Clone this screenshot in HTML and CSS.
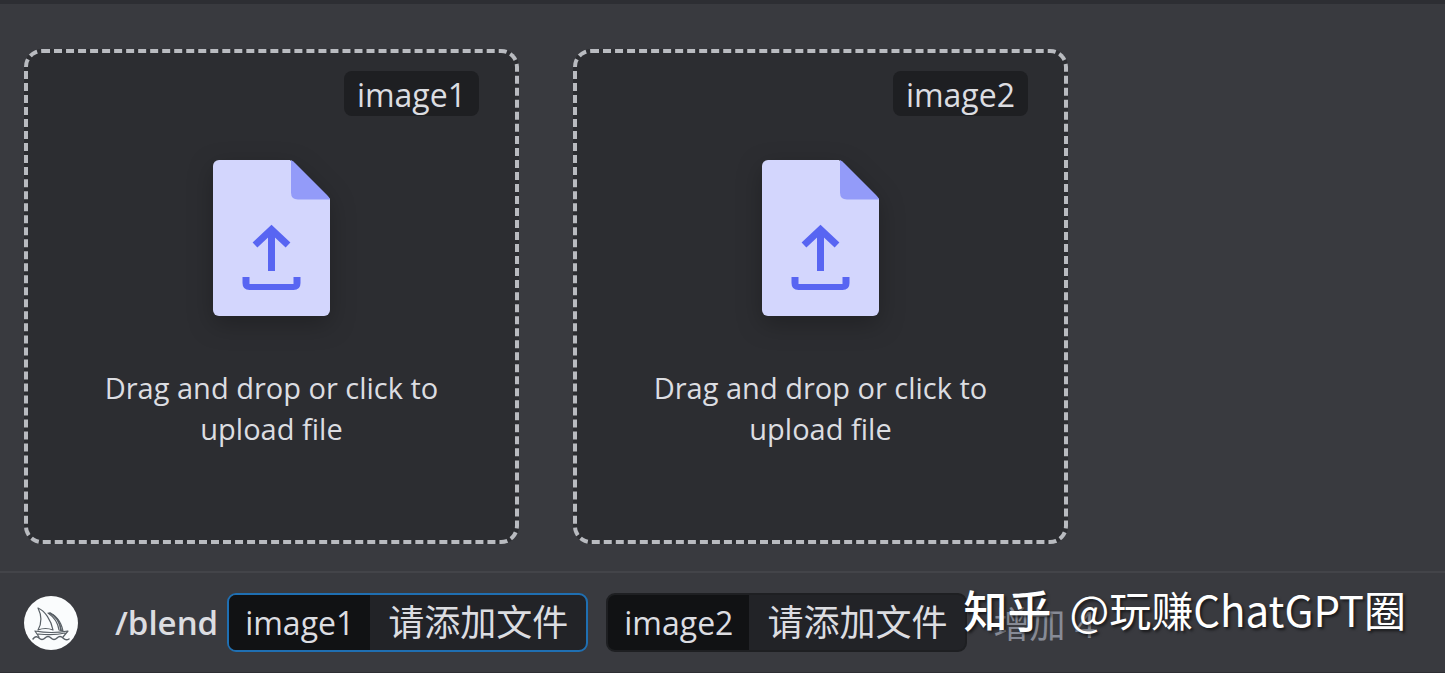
FILE: index.html
```html
<!DOCTYPE html>
<html lang="zh-CN">
<head>
<meta charset="UTF-8">
<meta name="viewport" content="width=device-width, initial-scale=1.0">
<title>/blend</title>
<link rel="stylesheet" href="styles.css">
</head>
<body>

<svg class="sprite" aria-hidden="true">
    <symbol id="upload-file" viewBox="0 0 117 156">
        <path fill="#d3d6fd" d="M6 0H77L117 39V150a6 6 0 0 1-6 6H6a6 6 0 0 1-6-6V6a6 6 0 0 1 6-6z"/>
        <path fill="#939bf9" d="M78 0Q80 1 82 3L114 35Q117 38 117 39.500H85q-7 0-7-7z"/>
        <path fill="none" stroke="#5865f2" stroke-width="7" d="M58.500 111V70M42 85l16.500-15.500L75 85"/>
        <path fill="#5865f2" d="M29.500 117h7v7h44v-7h7v6q0 7-7 7h-44q-7 0-7-7z"/>
    </symbol>
</svg>

<main class="uploads">
    <button class="drop-zone" type="button">
        <span class="tag">image1</span>
        <svg class="file-icon" aria-hidden="true"><use href="#upload-file"/></svg>
        <span class="hint">Drag and drop or click to upload file</span>
    </button>
    <button class="drop-zone" type="button">
        <span class="tag">image2</span>
        <svg class="file-icon" aria-hidden="true"><use href="#upload-file"/></svg>
        <span class="hint">Drag and drop or click to upload file</span>
    </button>
</main>

<form class="command-bar">
    <svg class="avatar" viewBox="0 0 54 54" aria-hidden="true">
        <circle cx="27" cy="27" r="27" fill="#fafcfd"/>
        <g fill="none" stroke="#596066" stroke-width="1.200" stroke-linecap="round" stroke-linejoin="round">
            <path d="M14 12C21 15 27 24 29 34C24 32 19 32 14 34C18 27 18 20 14 12z"/>
            <path d="M24 17C31 18 37 25 39 35L35 34C34 27 30 21 24 17z"/>
            <path d="M26 17C32 20 36 27 37 34" stroke-width="1.800"/>
            <path d="M11 35C22 37 33 37 44 35L39 41M11 35L15 41M14 38C23 39 33 39 41 37"/>
            <path d="M9 43q3-4 6-1t6 0t6 0t6 0t6 0t6 1" stroke-width="1.500"/>
        </g>
    </svg>
    <span class="command">/blend</span>
    <div class="option active">
        <label for="image1">image1</label>
        <input id="image1" type="text" value="请添加文件" readonly>
    </div>
    <div class="option">
        <label for="image2">image2</label>
        <input id="image2" type="text" value="请添加文件" readonly>
    </div>
    <button class="more" type="button">增加 4</button>
</form>

<div class="watermark"><strong>知乎</strong><span>@玩赚ChatGPT圈</span></div>

</body>
</html>
```
FILE: styles.css
```css
:root {
    --bg: #393a3f;
    --card: #2c2d31;
    --tag: #1e1f22;
    --text: #dcdde1;
    --muted: #878b96;
    --focus: #1f6fb2;
}

* {
    box-sizing: border-box;
}

body {
    margin: 0;
    min-height: 100vh;
    display: flex;
    flex-direction: column;
    position: relative;
    background: var(--bg);
    border-top: 4px solid #2d2e33;
    border-bottom: 1px solid #2d2e33;
    color: var(--text);
    font-family: "Open Sans", "Noto Sans CJK SC", sans-serif;
}

button,
input {
    font: inherit;
    color: inherit;
}

.sprite {
    display: none;
}

.uploads {
    display: flex;
    gap: 54px;
    padding: 45px 24px 27px;
}

.drop-zone {
    width: 495px;
    aspect-ratio: 1;
    display: flex;
    flex-direction: column;
    align-items: center;
    padding: 18px 36px;
    background: var(--card);
    border: 4px dashed #b9bbc0;
    border-radius: 18px;
    cursor: pointer;
}

.tag {
    align-self: flex-end;
    padding: 2px 13px 0;
    background: var(--tag);
    border-radius: 8px;
    font-size: 32px;
    line-height: 43px;
}

.file-icon {
    width: 117px;
    height: 156px;
    margin: 44px 0 51px;
    filter: drop-shadow(0 8px 12px rgba(0, 0, 0, 0.25));
}

.hint {
    max-width: 360px;
    font-size: 29px;
    line-height: 41px;
}

.command-bar {
    flex: 1;
    display: flex;
    align-items: center;
    padding: 0 24px;
    border-top: 2px solid #434449;
}

.avatar {
    width: 54px;
    height: 54px;
    margin-right: 37px;
}

.command {
    margin-right: 9px;
    font-size: 33px;
    font-weight: 600;
}

.option {
    display: flex;
    margin-right: 18px;
    height: 59px;
    border: 2px solid var(--tag);
    border-radius: 9px;
    background: #222327;
    overflow: hidden;
    font-size: 32px;
    line-height: 55px;
}

.option.active {
    border-color: var(--focus);
}

.option label {
    padding: 0 16px;
    background: #111214;
}

.option input {
    width: 216px;
    padding: 0 18px;
    border: 0;
    outline: 0;
    background: none;
    font-size: 36px;
}

.more {
    padding: 0 8px;
    border: 0;
    background: none;
    color: var(--muted);
    font-size: 36px;
}

.watermark {
    position: absolute;
    right: 39px;
    bottom: 33px;
    display: flex;
    align-items: center;
    gap: 18px;
    color: #fff;
    font-family: "Noto Sans CJK SC", sans-serif;
    font-size: 42px;
    line-height: 60px;
    text-shadow: 2px 2px 3px rgba(0, 0, 0, 0.6);
    white-space: nowrap;
    pointer-events: none;
}

.watermark strong {
    font-size: 44px;
    font-weight: 500;
}
```
